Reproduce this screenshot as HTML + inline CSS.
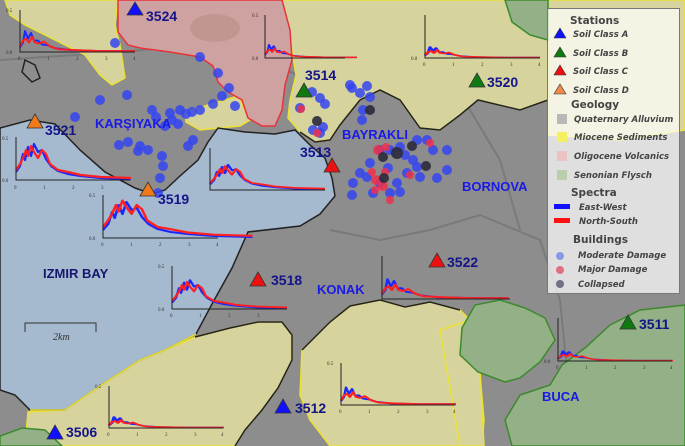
<!DOCTYPE html>
<html><head><meta charset="utf-8"><style>
html,body{margin:0;padding:0;width:685px;height:446px;overflow:hidden;background:#8d8d8d}
svg{display:block}
.st{font:bold 14px "Liberation Sans",sans-serif;fill:#14148a}
.lb{font:bold 13px "Liberation Sans",sans-serif;fill:#1a1ae6}
.tk{font:5px "Liberation Serif",serif;fill:#333}
.lh{font:bold 10.5px "DejaVu Sans","Liberation Sans",sans-serif;fill:#444}
.li{font:italic bold 8.5px "DejaVu Sans","Liberation Sans",sans-serif;fill:#444}
</style></head><body>
<svg width="685" height="446" viewBox="0 0 685 446" xmlns="http://www.w3.org/2000/svg">
<defs>
<path id="bA" d="M0,-8 L4,-14 7,-26 9,-20 12,-33 15,-24 18,-36 22,-28 26,-30 30,-21 35,-14 42,-9 52,-6 65,-4 85,-2 115,-1"/>
<path id="rA" d="M0,-10 L4,-16 7,-22 10,-30 12,-24 15,-34 18,-28 22,-22 26,-30 30,-26 34,-16 42,-10 52,-8 65,-5 85,-3 115,-2"/>
<path id="bB" d="M0,-5 L3,-10 5,-22 8,-14 11,-20 14,-12 18,-12 22,-8 28,-7 35,-4 50,-2 80,-1 115,-1"/>
<path id="rB" d="M0,-6 L3,-12 6,-14 9,-10 12,-16 15,-10 19,-9 24,-11 30,-6 38,-3 55,-2 80,-1 115,-1"/>
</defs>
<rect width="685" height="446" fill="#8d8d8d"/>
<g stroke="#7a7a7a" stroke-width="2" fill="none">
<path d="M0,60 L120,52 200,45 300,75 420,55 545,40"/>
<path d="M330,230 L380,240 430,230 480,215 540,240 560,300 570,400 560,446"/>
<path d="M430,90 L470,110 500,160 520,230"/>
</g>
<g fill="#d7d39d" stroke="#ece235" stroke-width="1.5">
<path d="M5,0 L118,0 L115,25 L120,45 L125,78 L112,85 L100,75 L85,55 L55,40 L25,25 L10,15 Z"/>
<path d="M185,112 L238,96 L250,120 L240,126 L200,130 L186,122 Z"/>
<path d="M280,0 L548,0 L548,100 L520,110 L478,100 L460,115 L440,130 L420,128 L400,100 L380,90 L360,100 L340,125 L330,140 L315,142 L300,132 L288,118 L290,100 L296,75 L290,40 Z"/>
<path d="M548,0 L685,0 L685,130 L620,140 L548,135 Z"/>
<path d="M195,337 L230,328 L258,322 L282,322 L292,335 L292,360 L278,388 L262,410 L245,430 L235,446 L25,446 L28,412 L65,410 L100,386 L140,360 L165,350 Z"/>
<path d="M302,350 L330,322 L350,306 L380,300 L405,307 L430,302 L460,310 L470,320 L462,355 L480,375 L484,420 L482,446 L330,446 L310,420 L300,395 Z"/>
<path d="M440,330 L470,320 L480,370 L484,446 L460,446 Z"/>
</g>
<path d="M118,0 L282,0 L290,30 L292,60 L285,85 L282,110 L275,126 L262,126 L248,118 L242,100 L228,92 L218,82 L213,66 L200,57 L170,52 L140,48 L128,45 L118,32 Z" fill="#cfa2a2" stroke="#e8323a" stroke-width="1.5"/>
<ellipse cx="215" cy="28" rx="25" ry="14" fill="#b98e84" opacity="0.6"/>
<g fill="#93b086" stroke="#3c8a2c" stroke-width="1.5">
<path d="M505,0 L548,0 L548,40 L530,35 L512,22 Z"/>
<path d="M462,328 L475,305 L500,300 L525,308 L545,318 L555,340 L540,362 L520,378 L505,382 L478,372 L460,355 Z"/>
<path d="M520,395 L550,385 L562,365 L585,348 L610,325 L640,310 L685,305 L685,446 L512,446 L505,420 Z"/>
<path d="M0,436 L22,428 L45,430 L62,446 L0,446 Z"/>
</g>
<path d="M0,128 L30,120 L55,124 L80,150 L105,172 L135,188 L152,194 L165,190 L180,176 L198,160 L208,142 L218,128 L245,132 L275,134 L295,130 L310,145 L325,158 L332,178 L335,196 L320,214 L300,226 L248,232 L232,268 L212,304 L196,334 L165,350 L140,360 L100,386 L65,410 L30,410 L15,395 L0,390 Z" fill="#a5b9cf" stroke="#222" stroke-width="1.5"/>
<path d="M196,334 L165,350 L140,360 L100,386 L65,410 L30,410" fill="none" stroke="#ece235" stroke-width="1.5"/>
<g fill="none" stroke="#222" stroke-width="1.5">
<path d="M300,132 L315,142 L330,140 L340,125 L360,100 L380,90 L400,100 L420,128 L440,130 L460,115 L478,100 L520,110 L548,100"/>
<path d="M195,337 L230,328 L258,322 L282,322 L292,335 L292,360 L278,388 L262,410 L245,430 L235,446"/>
<path d="M302,350 L330,322 L350,306 L380,300 L405,307 L430,302 L460,310"/>
<path d="M25,60 L35,65 L40,78 L32,82 L22,72 Z"/>
</g>
<path d="M25,332 L25,323 L96,323 L96,332" fill="none" stroke="#333" stroke-width="1"/>
<text x="53" y="340" style="font:italic 10px 'Liberation Serif',serif;fill:#333">2km</text>
<g fill="#3545f0" fill-opacity="0.85">
<circle cx="115" cy="43" r="5"/><circle cx="200" cy="57" r="5"/><circle cx="218" cy="73" r="5"/><circle cx="229" cy="88" r="5"/><circle cx="235" cy="106" r="5"/><circle cx="127" cy="95" r="5"/><circle cx="100" cy="100" r="5"/><circle cx="75" cy="117" r="5"/><circle cx="170" cy="113" r="5"/><circle cx="180" cy="110" r="5"/><circle cx="186" cy="114" r="5"/><circle cx="172" cy="120" r="5"/><circle cx="178" cy="124" r="5"/><circle cx="165" cy="126" r="5"/><circle cx="152" cy="110" r="5"/><circle cx="156" cy="117" r="5"/><circle cx="192" cy="112" r="5"/><circle cx="200" cy="110" r="5"/><circle cx="213" cy="104" r="5"/><circle cx="222" cy="96" r="5"/><circle cx="140" cy="146" r="5"/><circle cx="148" cy="150" r="5"/><circle cx="119" cy="145" r="5"/><circle cx="128" cy="142" r="5"/><circle cx="138" cy="151" r="5"/><circle cx="162" cy="156" r="5"/><circle cx="163" cy="166" r="5"/><circle cx="160" cy="178" r="5"/><circle cx="158" cy="193" r="5"/><circle cx="193" cy="140" r="5"/><circle cx="188" cy="146" r="5"/>
<circle cx="300" cy="108" r="5"/><circle cx="313" cy="130" r="5"/><circle cx="323" cy="127" r="5"/><circle cx="320" cy="133" r="5"/><circle cx="352" cy="88" r="5"/><circle cx="360" cy="93" r="5"/><circle cx="367" cy="86" r="5"/><circle cx="370" cy="97" r="5"/><circle cx="363" cy="110" r="5"/><circle cx="362" cy="120" r="5"/><circle cx="312" cy="92" r="5"/><circle cx="320" cy="98" r="5"/><circle cx="325" cy="104" r="5"/><circle cx="380" cy="150" r="5"/><circle cx="390" cy="150" r="5"/><circle cx="400" cy="147" r="5"/><circle cx="417" cy="140" r="5"/><circle cx="427" cy="140" r="5"/><circle cx="433" cy="150" r="5"/><circle cx="447" cy="150" r="5"/><circle cx="417" cy="167" r="5"/><circle cx="413" cy="160" r="5"/><circle cx="407" cy="173" r="5"/><circle cx="420" cy="177" r="5"/><circle cx="360" cy="173" r="5"/><circle cx="367" cy="177" r="5"/><circle cx="353" cy="183" r="5"/><circle cx="352" cy="195" r="5"/><circle cx="373" cy="193" r="5"/><circle cx="380" cy="183" r="5"/><circle cx="390" cy="193" r="5"/><circle cx="400" cy="192" r="5"/><circle cx="397" cy="183" r="5"/><circle cx="437" cy="178" r="5"/><circle cx="447" cy="170" r="5"/><circle cx="405" cy="155" r="5"/><circle cx="370" cy="163" r="5"/><circle cx="388" cy="168" r="5"/><circle cx="350" cy="85" r="5"/>
</g>
<g fill="#f0304a" fill-opacity="0.85">
<circle cx="301" cy="109" r="4"/><circle cx="317" cy="133" r="4"/><circle cx="378" cy="150" r="5"/><circle cx="386" cy="147" r="4"/><circle cx="430" cy="143" r="4"/><circle cx="410" cy="175" r="4"/><circle cx="376" cy="180" r="5"/><circle cx="383" cy="186" r="5"/><circle cx="375" cy="190" r="4"/><circle cx="390" cy="200" r="4"/><circle cx="385" cy="172" r="4"/><circle cx="372" cy="172" r="4"/>
</g>
<g fill="#2a2a3a" fill-opacity="0.9">
<circle cx="317" cy="121" r="5"/><circle cx="370" cy="110" r="5"/><circle cx="383" cy="157" r="5"/><circle cx="397" cy="153" r="6"/><circle cx="426" cy="166" r="5"/><circle cx="384" cy="178" r="5"/><circle cx="412" cy="146" r="5"/>
</g>
<g fill="none" stroke-linejoin="round">
<g transform="translate(20,52) scale(1,0.95)"><use href="#bB" stroke="#1a28ff" stroke-width="2"/><use href="#rB" stroke="#ff2020" stroke-width="2"/></g>
<g transform="translate(16,180)"><use href="#bA" stroke="#1a28ff" stroke-width="2.2"/><use href="#rA" stroke="#ff2020" stroke-width="2.2"/></g>
<g transform="translate(103,238)"><use href="#bA" transform="scale(1.3,1)" stroke="#1a28ff" stroke-width="2"/><use href="#rA" transform="scale(1.3,1.1)" stroke="#ff2020" stroke-width="2"/></g>
<g transform="translate(265,58) scale(0.8,0.6)"><use href="#bB" stroke="#1a28ff" stroke-width="2.5"/><use href="#rB" stroke="#ff2020" stroke-width="2.5"/></g>
<g transform="translate(425,58) scale(1,0.5)"><use href="#bB" stroke="#1a28ff" stroke-width="3"/><use href="#rB" stroke="#ff2020" stroke-width="3"/></g>
<g transform="translate(210,190) scale(1,0.7)"><use href="#bA" stroke="#1a28ff" stroke-width="2.5"/><use href="#rA" stroke="#ff2020" stroke-width="2.5"/></g>
<g transform="translate(172,309) scale(1,0.8)"><use href="#bA" stroke="#1a28ff" stroke-width="2.4"/><use href="#rA" stroke="#ff2020" stroke-width="2.4"/></g>
<g transform="translate(382,299) scale(1.1,0.9)"><use href="#bB" stroke="#1a28ff" stroke-width="2.2"/><use href="#rB" stroke="#ff2020" stroke-width="2.2"/></g>
<g transform="translate(341,405) scale(1,0.8)"><use href="#bB" stroke="#1a28ff" stroke-width="2.4"/><use href="#rB" stroke="#ff2020" stroke-width="2.4"/></g>
<g transform="translate(109,428) scale(1,0.5)"><use href="#bB" stroke="#1a28ff" stroke-width="3"/><use href="#rB" stroke="#ff2020" stroke-width="3"/></g>
<g transform="translate(558,361) scale(1,0.45)"><use href="#bB" stroke="#1a28ff" stroke-width="3"/><use href="#rB" stroke="#ff2020" stroke-width="3"/></g>
</g>
<g fill="none" stroke="#222" stroke-width="1">
<path d="M20,10 V52 H135"/><path d="M16,137 V180 H130"/><path d="M103,195 V238 H218"/><path d="M265,15 V58 H345"/><path d="M425,15 V58 H540"/><path d="M210,148 V190 H325"/><path d="M172,266 V309 H287"/><path d="M382,256 V299 H510"/><path d="M341,363 V405 H455"/><path d="M109,386 V428 H223"/><path d="M558,318 V361 H672"/>
</g>
<g class="tk">
<text x="6" y="12">0.5</text><text x="6" y="54">0.0</text><text x="18" y="60">0</text><text x="47" y="60">1</text><text x="76" y="60">2</text><text x="105" y="60">3</text><text x="133" y="60">4</text>
<text x="2" y="140">0.5</text><text x="2" y="182">0.0</text><text x="14" y="189">0</text><text x="43" y="189">1</text><text x="72" y="189">2</text><text x="101" y="189">3</text>
<text x="89" y="197">0.5</text><text x="89" y="240">0.0</text><text x="101" y="246">0</text><text x="130" y="246">1</text><text x="159" y="246">2</text><text x="188" y="246">3</text><text x="216" y="246">4</text>
<text x="252" y="17">0.5</text><text x="252" y="60">0.0</text>
<text x="411" y="60">0.0</text><text x="423" y="66">0</text><text x="452" y="66">1</text><text x="481" y="66">2</text><text x="510" y="66">3</text><text x="538" y="66">4</text>
<text x="158" y="268">0.5</text><text x="158" y="311">0.0</text><text x="170" y="317">0</text><text x="199" y="317">1</text><text x="228" y="317">2</text><text x="257" y="317">3</text>
<text x="327" y="365">0.5</text><text x="339" y="413">0</text><text x="368" y="413">1</text><text x="397" y="413">2</text><text x="426" y="413">3</text><text x="453" y="413">4</text>
<text x="95" y="388">0.5</text><text x="107" y="436">0</text><text x="136" y="436">1</text><text x="165" y="436">2</text><text x="194" y="436">3</text><text x="221" y="436">4</text>
<text x="544" y="363">0.0</text><text x="556" y="369">0</text><text x="585" y="369">1</text><text x="614" y="369">2</text><text x="643" y="369">3</text><text x="670" y="369">4</text>
</g>
<g stroke="#333" stroke-width="0.8">
<path d="M135,2 L143,15 L127,15 Z" fill="#1010ff"/>
<path d="M304,83 L312,97 L296,97 Z" fill="#0f7a12"/>
<path d="M477,73 L485,87 L469,87 Z" fill="#0f7a12"/>
<path d="M35,114 L43,128 L27,128 Z" fill="#f07a1a"/>
<path d="M148,182 L156,196 L140,196 Z" fill="#f07a1a"/>
<path d="M332,158 L340,172 L324,172 Z" fill="#ee1010"/>
<path d="M258,272 L266,286 L250,286 Z" fill="#ee1010"/>
<path d="M437,253 L445,267 L429,267 Z" fill="#ee1010"/>
<path d="M628,315 L636,329 L620,329 Z" fill="#0f7a12"/>
<path d="M283,399 L291,413 L275,413 Z" fill="#1010ff"/>
<path d="M55,425 L63,439 L47,439 Z" fill="#1010ff"/>
</g>
<g class="st">
<text x="146" y="21">3524</text><text x="305" y="80">3514</text><text x="487" y="87">3520</text><text x="45" y="135">3521</text><text x="158" y="204">3519</text><text x="300" y="157">3513</text><text x="271" y="285">3518</text><text x="447" y="267">3522</text><text x="639" y="329">3511</text><text x="295" y="413">3512</text><text x="66" y="437">3506</text>
</g>
<g class="lb">
<text x="95" y="128">KARŞIYAKA</text><text x="342" y="139">BAYRAKLI</text><text x="462" y="191">BORNOVA</text><text x="317" y="294">KONAK</text><text x="542" y="401">BUCA</text>
<text x="43" y="278" style="fill:#16166e">IZMIR BAY</text>
</g>
<rect x="547.5" y="8.5" width="132" height="285" fill="#ffffff" fill-opacity="0.72" stroke="#777" stroke-width="1"/>
<text class="lh" x="570" y="24">Stations</text>
<g stroke="#333" stroke-width="0.6">
<path d="M560,28 L566,38 L554,38 Z" fill="#1010ff"/>
<path d="M560,47 L566,57 L554,57 Z" fill="#0f7a12"/>
<path d="M560,65 L566,75 L554,75 Z" fill="#ee1010"/>
<path d="M560,84 L566,94 L554,94 Z" fill="#f08a4a"/>
</g>
<text class="li" x="573" y="37">Soil Class A</text><text class="li" x="573" y="56">Soil Class B</text><text class="li" x="573" y="74">Soil Class C</text><text class="li" x="573" y="93">Soil Class D</text>
<text class="lh" x="571" y="108">Geology</text>
<rect x="557" y="114" width="10" height="10" fill="#b8b8b8"/><rect x="557" y="132" width="10" height="10" fill="#f5f060"/><rect x="557" y="151" width="10" height="10" fill="#ecc3c3"/><rect x="557" y="170" width="10" height="10" fill="#b9cfac"/>
<text class="li" x="574" y="122">Quaternary Alluvium</text><text class="li" x="574" y="140">Miocene Sediments</text><text class="li" x="574" y="159">Oligocene Volcanics</text><text class="li" x="574" y="178">Senonian Flysch</text>
<text class="lh" x="571" y="196">Spectra</text>
<rect x="554" y="204" width="16" height="5" fill="#1010ff"/><rect x="554" y="218" width="16" height="5" fill="#ff1010"/>
<text class="li" x="579" y="210">East-West</text><text class="li" x="579" y="224">North-South</text>
<text class="lh" x="573" y="243">Buildings</text>
<circle cx="560" cy="256" r="4" fill="#8898e8"/><circle cx="560" cy="270" r="4" fill="#e07080"/><circle cx="560" cy="284" r="4" fill="#707088"/>
<text class="li" x="578" y="258">Moderate Damage</text><text class="li" x="578" y="272">Major Damage</text><text class="li" x="578" y="287">Collapsed</text>
</svg>
</body></html>
